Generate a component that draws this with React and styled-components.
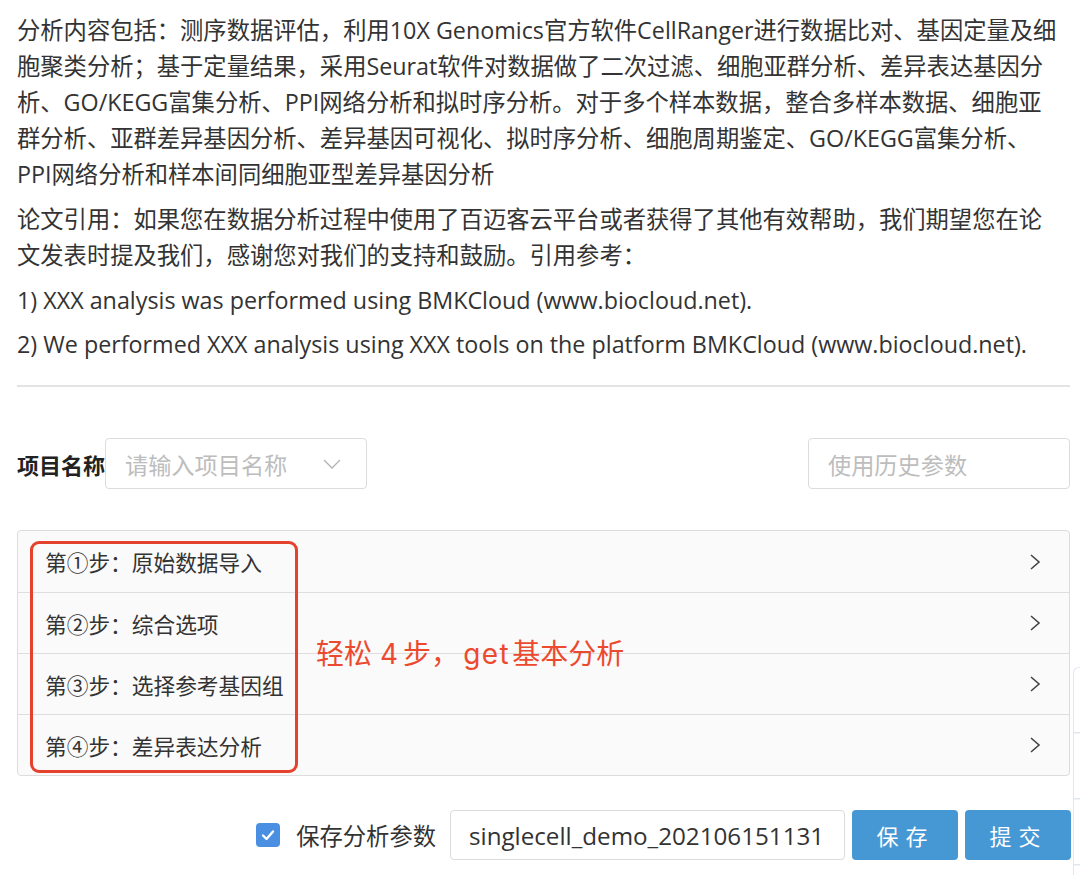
import React from "react";
import styled, { createGlobalStyle } from "styled-components";

const Global = createGlobalStyle`
  html, body { margin: 0; padding: 0; background: #ffffff; }
  body {
    font-family: "Open Sans", "Noto Sans CJK SC", sans-serif;
    color: #333333;
  }
  * { box-sizing: border-box; }
`;

const Page = styled.div`
  position: relative;
  width: 1080px;
  height: 875px;
  overflow: hidden;
  padding: 12px 9px 0 17px;
`;

const Para = styled.p`
  margin: 0 0 9px;
  font-size: 23.3px;
  line-height: 36px;
  color: #333333;
  white-space: nowrap;
`;

const CiteLine = styled(Para)`
  margin-bottom: 8px;
`;

const Divider = styled.hr`
  border: none;
  border-top: 2px solid #e3e3e3;
  margin: 23px 0 0;
  width: 1053px;
`;

const FormRow = styled.div`
  display: flex;
  align-items: center;
  margin-top: 51px;
  width: 1053px;
`;

const Label = styled.span`
  font-size: 22px;
  font-weight: 700;
  color: #222;
  width: 88px;
  white-space: nowrap;
`;

const Box = styled.div`
  width: 262px;
  height: 51px;
  border: 1.5px solid #dcdcdc;
  border-radius: 4px;
  display: flex;
  align-items: center;
  justify-content: space-between;
  padding: 0 24px 0 19px;
  font-size: 23.2px;
  color: #bdbdbd;
  background: #fff;
  margin-left: ${(p) => (p.$push ? "auto" : "0")};
`;

const Collapse = styled.div`
  margin-top: 41px;
  width: 1053px;
  border: 1.5px solid #dcdcdc;
  border-radius: 4px;
  background: #fafafa;
  overflow: hidden;
`;

const StepRow = styled.div`
  height: 61px;
  display: flex;
  align-items: center;
  justify-content: space-between;
  padding: 0 28px 0 27px;
  font-size: 21.7px;
  color: #333;
  border-top: ${(p) => (p.$first ? "none" : "1.5px solid #dedede")};
`;

const Annot = styled.div`
  position: absolute;
  left: 30px;
  top: 541px;
  width: 268px;
  height: 232px;
  border: 3px solid #e4422c;
  border-radius: 9px;
  pointer-events: none;
`;

const AnnotText = styled.div`
  position: absolute;
  left: 316px;
  top: 634px;
  font-family: Inter, "Noto Sans CJK SC", sans-serif;
  font-size: 28px;
  line-height: 40px;
  color: #ec4a2f;
  white-space: nowrap;
`;

const AnnotNum = styled.span`
  margin: 0 5px 0 8px;
`;

const AnnotLatin = styled.span`
  letter-spacing: 1.5px;
  margin: 0 2px 0 4px;
`;

const BottomRow = styled.div`
  display: flex;
  align-items: center;
  justify-content: flex-end;
  margin-top: 34px;
  width: 1054px;
  gap: 7px;
`;

const Check = styled.span`
  width: 24px;
  height: 24px;
  border-radius: 4px;
  background: #4a8fe2;
  display: inline-flex;
  align-items: center;
  justify-content: center;
  margin-right: 9px;
`;

const CheckLabel = styled.span`
  font-size: 23.3px;
  color: #333;
  margin-right: 7px;
`;

const NameInput = styled.div`
  width: 395px;
  height: 50px;
  border: 1.5px solid #dcdcdc;
  border-radius: 4px;
  display: flex;
  align-items: center;
  padding: 0 18px;
  font-size: 24.2px;
  color: #333;
  white-space: nowrap;
  overflow: hidden;
`;

const Btn = styled.button`
  width: 106px;
  height: 50px;
  border: none;
  border-radius: 4px;
  background: #4698d4;
  color: #fff;
  font-family: inherit;
  font-size: 22px;
  letter-spacing: 7px;
  padding-left: 7px;
`;

const EdgeDeco = styled.div`
  position: absolute;
  left: 1073px;
  top: 667px;
  width: 20px;
  height: 220px;
  border-left: 1.5px solid #dfe7f0;
  border-top: 1.5px solid #dfe7f0;
  border-top-left-radius: 6px;
  background:
    linear-gradient(#dfe7f0, #dfe7f0) 0 64px / 10px 1.5px no-repeat,
    linear-gradient(#dfe7f0, #dfe7f0) 0 130px / 10px 1.5px no-repeat,
    linear-gradient(#dfe7f0, #dfe7f0) 0 196px / 10px 1.5px no-repeat;
`;

const Chevron = ({ dir = "right", color = "#444", size = 18 }) =>
  dir === "right" ? (
    <svg width="12" height={size} viewBox="0 0 12 18" fill="none">
      <path d="M2 2 L10 9 L2 16" stroke={color} strokeWidth="1.6" />
    </svg>
  ) : (
    <svg width="20" height="12" viewBox="0 0 20 12" fill="none">
      <path d="M2 2 L10 10 L18 2" stroke={color} strokeWidth="1.4" />
    </svg>
  );

const steps = [
  "第①步：原始数据导入",
  "第②步：综合选项",
  "第③步：选择参考基因组",
  "第④步：差异表达分析",
];

export default function App() {
  return (
    <Page>
      <Global />
      <Para>
        分析内容包括：测序数据评估，利用10X Genomics官方软件CellRanger进行数据比对、基因定量及细<br />
        胞聚类分析；基于定量结果，采用Seurat软件对数据做了二次过滤、细胞亚群分析、差异表达基因分<br />
        析、GO/KEGG富集分析、PPI网络分析和拟时序分析。对于多个样本数据，整合多样本数据、细胞亚<br />
        群分析、亚群差异基因分析、差异基因可视化、拟时序分析、细胞周期鉴定、GO/KEGG富集分析、<br />
        PPI网络分析和样本间同细胞亚型差异基因分析
      </Para>
      <Para>
        论文引用：如果您在数据分析过程中使用了百迈客云平台或者获得了其他有效帮助，我们期望您在论<br />
        文发表时提及我们，感谢您对我们的支持和鼓励。引用参考：
      </Para>
      <CiteLine>1) XXX analysis was performed using BMKCloud (www.biocloud.net).</CiteLine>
      <CiteLine>2) We performed XXX analysis using XXX tools on the platform BMKCloud (www.biocloud.net).</CiteLine>
      <Divider />
      <FormRow>
        <Label>项目名称</Label>
        <Box>
          <span>请输入项目名称</span>
          <Chevron dir="down" color="#b5b5b5" />
        </Box>
        <Box $push>
          <span>使用历史参数</span>
        </Box>
      </FormRow>
      <Collapse>
        {steps.map((s, i) => (
          <StepRow key={s} $first={i === 0}>
            <span>{s}</span>
            <Chevron />
          </StepRow>
        ))}
      </Collapse>
      <BottomRow>
        <Check>
          <svg width="14" height="12" viewBox="0 0 14 12" fill="none">
            <path d="M2 6.5 L5.5 10 L12 2.5" stroke="#fff" strokeWidth="2.4" strokeLinecap="round" strokeLinejoin="round" />
          </svg>
        </Check>
        <CheckLabel>保存分析参数</CheckLabel>
        <NameInput>singlecell_demo_202106151131</NameInput>
        <Btn>保存</Btn>
        <Btn>提交</Btn>
      </BottomRow>
      <Annot />
      <AnnotText>
        轻松<AnnotNum>4</AnnotNum>步，<AnnotLatin>get</AnnotLatin>基本分析
      </AnnotText>
      <EdgeDeco />
    </Page>
  );
}
